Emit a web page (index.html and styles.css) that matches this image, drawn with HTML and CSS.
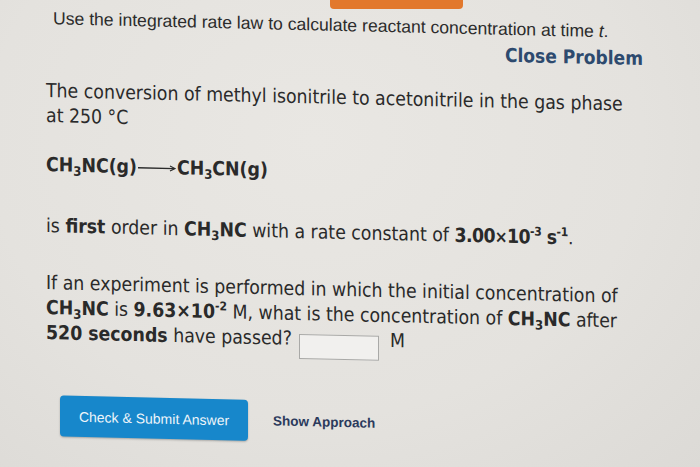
FILE: index.html
```html
<!DOCTYPE html>
<html>
<head>
<meta charset="utf-8">
<link rel="stylesheet" href="styles.css">
</head>
<body>
<div class="tabbar"><div class="tab"></div></div>
<div class="sheet">
  <h1 class="title">Use the integrated rate law to calculate reactant concentration at time <i>t</i>.</h1>
  <div class="closerow"><a class="close">Close Problem</a></div>
  <div class="problem">
    <p class="p1">The conversion of methyl isonitrile to acetonitrile in the gas phase at 250 °C</p>
    <p class="eq"><b>CH<sub>3</sub>NC(g)</b><svg class="arrow" width="38" height="10" viewBox="0 0 38 10"><path d="M0 5.5H36" stroke="#2a2a2a" stroke-width="1.3" fill="none"/><path d="M32 3L37 5.5L32 8" stroke="#2a2a2a" stroke-width="1.2" fill="none"/></svg><b>CH<sub>3</sub>CN(g)</b></p>
    <p class="p2">is <b>first</b> order in <b>CH<sub>3</sub>NC</b> with a rate constant of <b class="num">3.00<span class="times">×</span>10<sup>-3</sup> s<sup>-1</sup></b>.</p>
    <p class="p3">If an experiment is performed in which the initial concentration of <b>CH<sub>3</sub>NC</b> is <b>9.63×10<sup>-2</sup></b> M, what is the concentration of <b>CH<sub>3</sub>NC</b> after <b>520 seconds</b> have passed? <span class="input"></span> <span class="unit">M</span></p>
  </div>
  <div class="actions">
    <button class="submit">Check &amp; Submit Answer</button>
    <a class="approach">Show Approach</a>
  </div>
</div>
</body>
</html>
```
FILE: styles.css
```css
html, body { margin: 0; padding: 0; }
body {
  width: 700px; height: 467px; overflow: hidden;
  background: radial-gradient(ellipse at 45% 30%, #e9e7e3 0%, #e4e2de 60%, #dcdad6 100%);
  color: #2a2a2a;
}
.tabbar { height: 9px; padding-left: 330px; }
.tab { width: 133px; height: 9px; background: #e2782c; border-radius: 0 0 4px 4px; }
.sheet { transform: skewY(1.34deg); transform-origin: 0 0; }
.title {
  margin: 0 0 0 53px;
  font: 400 17.6px/16px "Liberation Sans", Arial, sans-serif;
  color: #2b2b2b;
}
.closerow { display: flex; justify-content: flex-end; padding-right: 57px; margin-top: 7px; }
.close { font: 700 19px/22px "DejaVu Sans Condensed", "DejaVu Sans", sans-serif; color: #2d4a6e; }
.problem {
  margin: 23px 0 0 46px; width: 600px;
  font: 400 19.3px/25px "DejaVu Sans Condensed", "DejaVu Sans", sans-serif;
  color: #2a2a2a;
}
.problem p { margin: 0; }
.p1 { width: 598px; }
.eq { margin-top: 24px !important; }
.problem b { font-weight: 700; }
.arrow { display: inline-block; vertical-align: 1px; margin: 0 1px; }
sub { font-size: 13px; vertical-align: -4px; line-height: 0; }
sup { font-size: 12px; vertical-align: 8px; line-height: 0; }
.num { letter-spacing: -0.6px; }
.num sup { font-size: 12px; letter-spacing: -0.3px; }
.times { font-size: 17px; }
.p2 { margin-top: 36px !important; }
.p3 { margin-top: 31px !important; width: 600px; }
.input {
  display: inline-block; width: 78px; height: 23px; vertical-align: -14px;
  background: #f1f0ee; border: 1px solid #a9a9a7; margin-left: 2px;
}
.unit { margin-left: 5px; }
.actions { display: flex; align-items: center; margin: 42px 0 0 60px; gap: 25px; }
.submit {
  width: 188px; height: 41px; border: none; border-radius: 4px;
  background: #1787cb; color: #eef5fa;
  font: 400 14px "Liberation Sans", Arial, sans-serif;
  box-shadow: 0 1px 2px rgba(0,0,0,0.25);
}
.approach { font: 700 13.5px "Liberation Sans", Arial, sans-serif; color: #2b3a5c; }
```
